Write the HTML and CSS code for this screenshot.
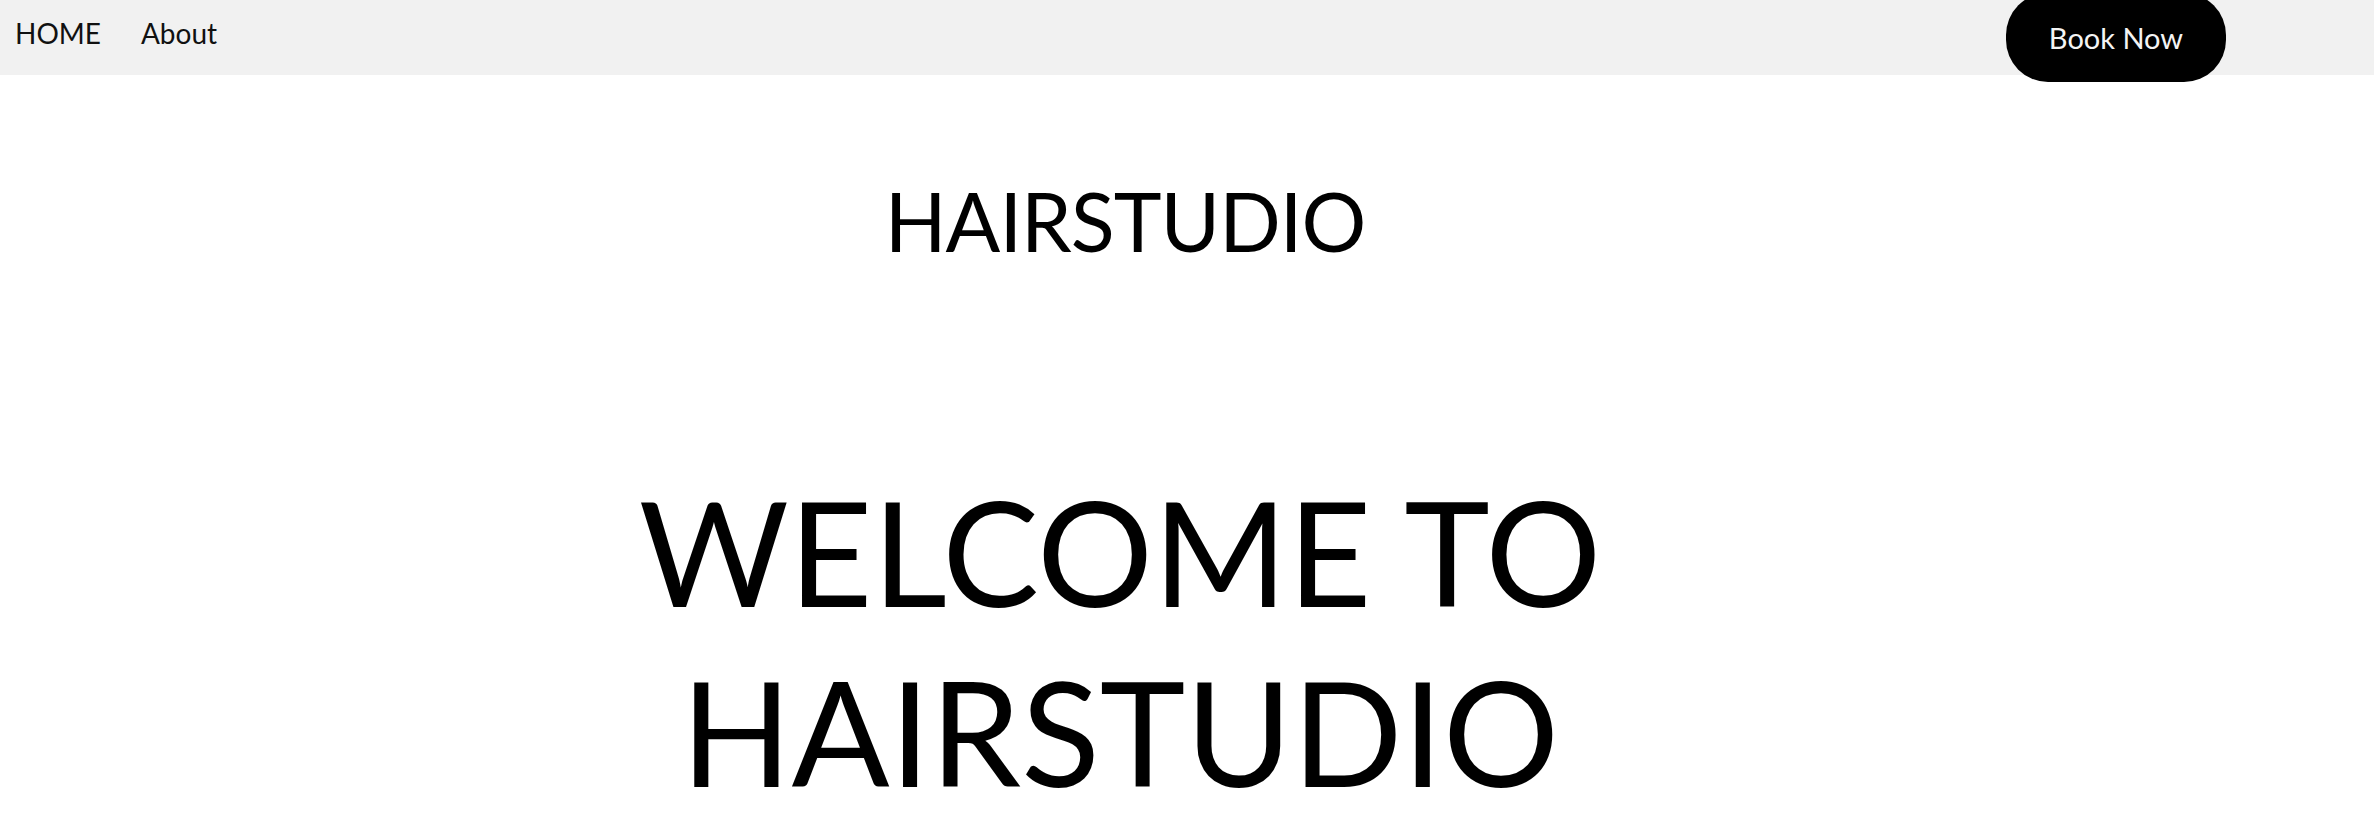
FILE: index.html
```html
<!DOCTYPE html>
<html lang="en">
<head>
<meta charset="utf-8">
<title>HAIRSTUDIO</title>
<link rel="stylesheet" href="styles.css">
</head>
<body>
<header class="topbar">
  <nav class="nav">
    <a class="nav-link" href="#">HOME</a>
    <a class="nav-link" href="#">About</a>
  </nav>
  <a class="book-btn" href="#">Book Now</a>
</header>
<main class="hero">
  <div class="brand">HAIRSTUDIO</div>
  <h1 class="welcome">WELCOME TO<br>HAIRSTUDIO</h1>
</main>
</body>
</html>
```

FILE: styles.css
```css
html, body {
  margin: 0;
  padding: 0;
  background: #ffffff;
  overflow: hidden;
}
body {
  font-family: Lato, "Liberation Sans", sans-serif;
  color: #000;
}
.topbar {
  height: 75px;
  background: #f1f1f1;
  display: flex;
  align-items: flex-start;
  justify-content: space-between;
  padding: 0 148px 0 15px;
}
.nav {
  display: flex;
  gap: 40px;
  padding-top: 15px;
}
.nav-link {
  font-size: 28px;
  font-weight: 400;
  line-height: 36px;
  color: #111;
  text-decoration: none;
}
.book-btn {
  margin-top: -7px;
  width: 220px;
  height: 89px;
  border-radius: 42px;
  background: #000;
  color: #f4f4f4;
  font-size: 29px;
  font-weight: 400;
  display: flex;
  align-items: center;
  justify-content: center;
  text-decoration: none;
  flex: none;
}
.hero {
  display: flex;
  flex-direction: column;
  align-items: center;
  padding: 97px 130px 0 0;
}
.brand {
  font-size: 81px;
  line-height: 1.2;
  font-weight: 400;
  letter-spacing: -1px;
  margin-left: 6px;
}
.welcome {
  margin: 192px 0 0;
  font-size: 145px;
  line-height: 180px;
  font-weight: 400;
  text-align: center;
  letter-spacing: 0;
  margin-left: -4px;
}
```
